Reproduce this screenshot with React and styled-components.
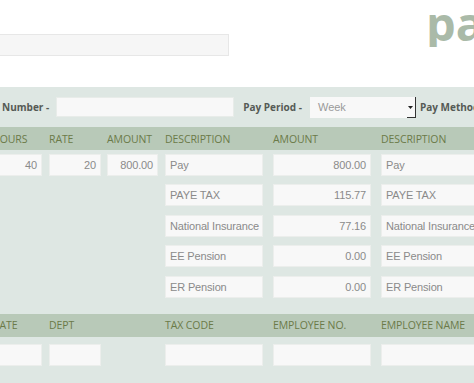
import React from 'react';
import styled, { createGlobalStyle } from 'styled-components';

const GlobalStyle = createGlobalStyle`
    body {
        margin: 0;
        background: #ffffff;
        overflow: hidden;
    }
`;

// w = field width for each column
const columns = [{ w: 50 }, { w: 52 }, { w: 51 }, { w: 98 }, { w: 98 }, { w: 98 }];

const earnings = [
    ['40', '20', '800.00', 'Pay', '800.00', 'Pay'],
    [null, null, null, 'PAYE TAX', '115.77', 'PAYE TAX'],
    [null, null, null, 'National Insurance', '77.16', 'National Insurance'],
    [null, null, null, 'EE Pension', '0.00', 'EE Pension'],
    [null, null, null, 'ER Pension', '0.00', 'ER Pension'],
];

const topHeads = ['HOURS', 'RATE', 'AMOUNT', 'DESCRIPTION', 'AMOUNT', 'DESCRIPTION'];
const bottomHeads = ['DATE', 'DEPT', null, 'TAX CODE', 'EMPLOYEE NO.', 'EMPLOYEE NAME'];

const App = () => {
    return (
        <Viewport>
            <GlobalStyle />
            <Sheet>
                <TopArea>
                    <WideInput />
                    <Title>payslip</Title>
                </TopArea>

                <InfoBand>
                    <Label>Employee Number -</Label>
                    <TextBox $w={178} />
                    <Label $gap={9}>Pay Period -</Label>
                    <Select>
                        <span>Week</span>
                        <SelectArrow>
                            <svg width="5" height="3" viewBox="0 0 5 3">
                                <path d="M0 0 L5 0 L2.5 3 Z" fill="#222" />
                            </svg>
                        </SelectArrow>
                    </Select>
                    <Label $gap={4}>Pay Method -</Label>
                </InfoBand>

                <HeadRow>
                    {topHeads.map((h, i) => (
                        <HeadCell key={i}>{h}</HeadCell>
                    ))}
                </HeadRow>

                <Body>
                    {earnings.map((row, r) => (
                        <Row key={r}>
                            {row.map((v, i) =>
                                v === null ? (
                                    <span key={i} />
                                ) : (
                                    <Field key={i} $w={columns[i].w} $right={/^[\d.]+$/.test(v)}>
                                        {v}
                                    </Field>
                                )
                            )}
                        </Row>
                    ))}
                </Body>

                <HeadRow>
                    {bottomHeads.map((h, i) => (
                        <HeadCell key={i}>{h}</HeadCell>
                    ))}
                </HeadRow>

                <Footer>
                    <Row>
                        {bottomHeads.map((h, i) =>
                            h === null ? <span key={i} /> : <Field key={i} $w={columns[i].w} />
                        )}
                    </Row>
                </Footer>
            </Sheet>
        </Viewport>
    );
};

const Viewport = styled.div`
    width: 474px;
    height: 383px;
    overflow: hidden;
    font-family: "Liberation Sans", Arial, sans-serif;
`;

const Sheet = styled.div`
    margin-left: -60px;
    width: 600px;
`;

const TopArea = styled.div`
    height: 87px;
    display: flex;
    justify-content: space-between;
    align-items: flex-start;
`;

const WideInput = styled.div`
    margin-top: 34px;
    width: 289px;
    height: 22px;
    box-sizing: border-box;
    background: #f6f6f6;
    border: 1px solid #e7e7e7;
`;

const Title = styled.div`
    margin-left: 197px;
    flex: 1;
    font-family: "Open Sans", sans-serif;
    font-weight: 700;
    font-size: 47px;
    line-height: 47px;
    color: #aabaa8;
    white-space: nowrap;
    overflow: hidden;
`;

const InfoBand = styled.div`
    height: 40px;
    background: #dee7e3;
    display: flex;
    align-items: center;
    padding-left: 11px;
    white-space: nowrap;
`;

const Label = styled.span`
    margin-left: ${(p) => p.$gap || 0}px;
    font-family: "Open Sans", sans-serif;
    font-weight: 700;
    font-size: 10px;
    color: #555a55;
`;

const TextBox = styled.div`
    margin-left: 7px;
    width: ${(p) => p.$w}px;
    height: 20px;
    box-sizing: border-box;
    background: #f8f8f8;
    border: 1px solid #e8ece9;
`;

const Select = styled.div`
    margin-left: 8px;
    width: 106px;
    height: 21px;
    box-sizing: border-box;
    background: #f8f8f8;
    display: flex;
    align-items: center;
    justify-content: space-between;
    padding-left: 8px;
    font-size: 11px;
    color: #9a9a9a;
`;

const SelectArrow = styled.div`
    width: 9px;
    height: 21px;
    box-sizing: border-box;
    border-right: 1px solid #333;
    border-bottom: 1px solid #333;
    display: flex;
    align-items: center;
    justify-content: center;
    padding-top: 2px;
`;

const grid = `
    display: grid;
    grid-template-columns: 57px 58px 58px 108px 108px 98px;
    padding-left: 52px;
`;

const HeadRow = styled.div`
    ${grid}
    height: 23px;
    background: #b8c9b8;
    align-items: center;
`;

const HeadCell = styled.div`
    font-family: "Open Sans", sans-serif;
    font-size: 10.5px;
    letter-spacing: -0.1px;
    color: #6b7a48;
    white-space: nowrap;
`;

const Body = styled.div`
    background: #dee7e3;
    padding: 4px 0 16px;
    display: flex;
    flex-direction: column;
    gap: 8.4px;
`;

const Footer = styled.div`
    background: #dee7e3;
    padding-top: 7px;
    height: 60px;
`;

const Row = styled.div`
    ${grid}
`;

const Field = styled.div`
    width: ${(p) => p.$w}px;
    height: 22px;
    box-sizing: border-box;
    background: #f8f8f8;
    border: 1px solid #eceeec;
    padding: 0 4px 0 4px;
    display: flex;
    align-items: center;
    justify-content: ${(p) => (p.$right ? 'flex-end' : 'flex-start')};
    font-size: 11px;
    letter-spacing: -0.15px;
    color: #8a8a8a;
    white-space: nowrap;
    overflow: hidden;
`;

export default App;
